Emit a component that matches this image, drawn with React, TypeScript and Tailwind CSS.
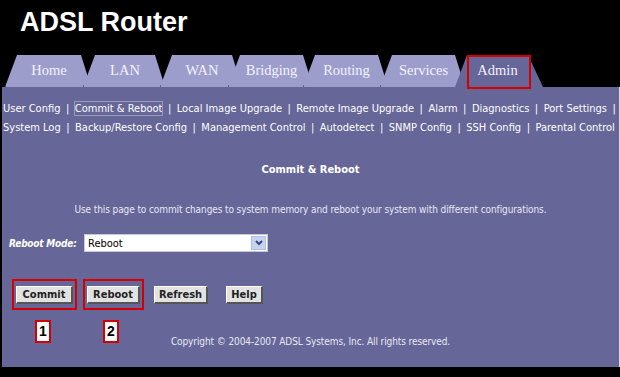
import React from "react";

const tabs = [
  { name: "Home", w: 86, ml: "ml-[5px]" },
  { name: "LAN", w: 82, ml: "-ml-[8px]" },
  { name: "WAN", w: 82, ml: "-ml-[5px]" },
  { name: "Bridging", w: 85, ml: "-ml-[14px]" },
  { name: "Routing", w: 85, ml: "-ml-[10px]" },
  { name: "Services", w: 85, ml: "-ml-[8px]" },
];

const row1 = ["User Config", "Commit & Reboot", "Local Image Upgrade", "Remote Image Upgrade", "Alarm", "Diagnostics", "Port Settings"];
const row2 = ["System Log", "Backup/Restore Config", "Management Control", "Autodetect", "SNMP Config", "SSH Config", "Parental Control"];

const ui = "font-['Tahoma','DejaVu_Sans_Condensed','Liberation_Sans',sans-serif]";

function NavRow({ items, trailing }: { items: string[]; trailing?: boolean }) {
  return (
    <div className="whitespace-nowrap leading-[19px]">
      {items.map((it, i) => (
        <span key={it}>
          <span className={it === "Commit & Reboot" ? "outline outline-1 outline-[#9a9ab8] outline-offset-0" : ""}>{it}</span>
          {(i < items.length - 1 || trailing) && <span className="mx-[5.5px]">|</span>}
        </span>
      ))}
    </div>
  );
}

function Btn({ label, w }: { label: string; w: string }) {
  return (
    <button
      className={`${w} h-[18px] bg-[#e2e2e2] border-t-[1px] border-l-[1px] border-b-2 border-r-2 border-t-white border-l-white border-b-[#555] border-r-[#555] text-[11px] font-bold text-[#222] leading-none flex items-center justify-center`}
    >
      {label}
    </button>
  );
}

export default function App() {
  return (
    <div className={`w-[620px] h-[377px] bg-black overflow-hidden flex flex-col ${ui}`}>
      <header className="h-[87px] flex flex-col">
        <h1 className="pl-[20px] pt-[6px] h-[55px] text-white text-[27px] font-bold font-['Liberation_Sans',Arial,sans-serif] leading-[32px]">
          ADSL Router
        </h1>
        <nav className="flex h-[32px] items-end font-['Liberation_Serif','Times_New_Roman',serif]">
          {tabs.map((t) => (
            <div
              key={t.name}
              style={{ width: t.w }}
              className={`${t.ml} h-[32px] bg-[#9d9dcc] [clip-path:polygon(12px_0,calc(100%_-_10px)_0,100%_100%,0_100%)] pl-[12px] pr-[10px] flex items-center justify-center text-[#f2f2ff] text-[14.5px] shadow-[inset_1px_0_0_#44446a]`}
            >
              {t.name}
            </div>
          ))}
          <div className="relative -ml-[10px] w-[88px] h-[32px]">
            <div className="h-full bg-[#666699] [clip-path:polygon(12px_0,calc(100%_-_15px)_0,100%_100%,0_100%)] pl-[12px] pr-[15px] flex items-center justify-center text-[#f2f2ff] text-[14.5px]">
              Admin
            </div>
            <div className="absolute left-[12px] top-0 w-[64px] h-[34px] border-2 border-[#d40000]" />
          </div>
        </nav>
      </header>

      <main className="flex-1 bg-[#666699] border-l-2 border-black border-r border-r-[#d8d8e8] flex flex-col text-white">
        <div className="pt-[12px] pl-[1px] text-[11px]">
          <NavRow items={row1} trailing />
          <NavRow items={row2} />
        </div>

        <div className="mt-[25px] text-center text-[11px] font-bold leading-[16px]">Commit &amp; Reboot</div>

        <p className="mt-[25px] text-center text-[10px] tracking-[-0.1px] text-[#e8e8f4] leading-[14px]">
          Use this page to commit changes to system memory and reboot your system with different configurations.
        </p>

        <div className="mt-[17px] flex items-center pl-[7px] gap-[6px]">
          <span className="w-[69px] shrink-0 whitespace-nowrap text-[10px] tracking-[-0.2px] font-bold italic">Reboot Mode:</span>
          <div className="w-[184px] shrink-0 h-[18px] bg-white border border-[#c8c8d8] flex items-center justify-between pl-[3px] pr-[1px]">
            <span className="text-[11px] text-black leading-none">Reboot</span>
            <span className="w-[15px] h-[14px] bg-[#c6d4f4] border border-[#b0c0e6] flex items-center justify-center">
              <svg width="8" height="6" viewBox="0 0 8 6">
                <path d="M1 1 L4 4 L7 1" stroke="#3c4a7a" strokeWidth="2" fill="none" />
              </svg>
            </span>
          </div>
        </div>

        <div className="relative mt-[27px] flex items-center pl-[10px]">
          <div className="border-2 border-[#d40000] h-[31px] w-[65px] flex items-center justify-center">
            <Btn label="Commit" w="w-[57px]" />
          </div>
          <div className="ml-[6px] border-2 border-[#d40000] h-[31px] w-[61px] flex items-center justify-center">
            <Btn label="Reboot" w="w-[53px]" />
          </div>
          <div className="ml-[10px]">
            <Btn label="Refresh" w="w-[54px]" />
          </div>
          <div className="ml-[18px]">
            <Btn label="Help" w="w-[37px]" />
          </div>
          <div className="absolute left-[33px] top-[41px] w-[16px] h-[23px] bg-white border-2 border-[#d40000] flex items-center justify-center text-black text-[14px] font-bold font-['Liberation_Sans',sans-serif]">
            1
          </div>
          <div className="absolute left-[101px] top-[41px] w-[16px] h-[23px] bg-white border-2 border-[#d40000] flex items-center justify-center text-black text-[14px] font-bold font-['Liberation_Sans',sans-serif]">
            2
          </div>
        </div>

        <p className="mt-[25px] text-center text-[10px] tracking-[-0.1px] text-[#e8e8f4] leading-[14px]">
          Copyright © 2004-2007 ADSL Systems, Inc. All rights reserved.
        </p>
      </main>
      <div className="h-[10px] bg-black" />
    </div>
  );
}
